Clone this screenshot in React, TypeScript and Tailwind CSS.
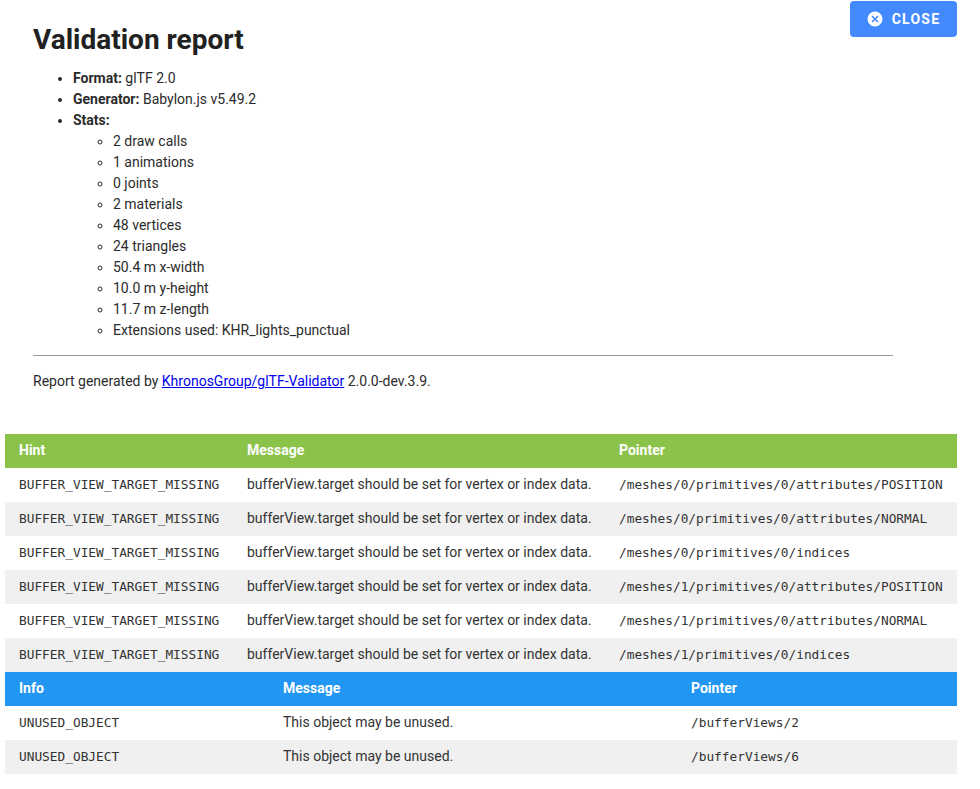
import { CircleX } from "lucide-react";

const stats = [
  "2 draw calls",
  "1 animations",
  "0 joints",
  "2 materials",
  "48 vertices",
  "24 triangles",
  "50.4 m x-width",
  "10.0 m y-height",
  "11.7 m z-length",
  "Extensions used: KHR_lights_punctual",
];

const hints = [
  "/meshes/0/primitives/0/attributes/POSITION",
  "/meshes/0/primitives/0/attributes/NORMAL",
  "/meshes/0/primitives/0/indices",
  "/meshes/1/primitives/0/attributes/POSITION",
  "/meshes/1/primitives/0/attributes/NORMAL",
  "/meshes/1/primitives/0/indices",
];

const infos = ["/bufferViews/2", "/bufferViews/6"];

function HeadRow({ color, label, widths }: { color: string; label: string; widths: string[] }) {
  return (
    <div className={`flex h-[34px] items-center pb-[2px] font-bold text-white ${color}`}>
      <div className={`pl-[14px] ${widths[0]}`}>{label}</div>
      <div className={`pl-[14px] ${widths[1]}`}>Message</div>
      <div className="flex-1 pl-[14px]">Pointer</div>
    </div>
  );
}

function Row({ code, message, pointer, widths }: { code: string; message: string; pointer: string; widths: string[] }) {
  return (
    <div className="flex h-[34px] items-center pb-[2px] text-[#333] even:bg-[#f0f0f0]">
      <div className={`pl-[14px] font-['DejaVu_Sans_Mono',monospace] text-[12.8px] ${widths[0]}`}>{code}</div>
      <div className={`pl-[14px] ${widths[1]}`}>{message}</div>
      <div className="flex-1 pl-[14px] font-['DejaVu_Sans_Mono',monospace] text-[12.8px]">{pointer}</div>
    </div>
  );
}

export default function App() {
  const hintWidths = ["w-[228px]", "w-[372px]"];
  const infoWidths = ["w-[264px]", "w-[408px]"];

  return (
    <div className="relative min-h-[789px] bg-white font-['Roboto',sans-serif] text-[14px] leading-[21px] text-[#212121]">
      <button className="absolute top-[1px] right-[23px] flex h-[36px] w-[107px] items-center justify-center gap-[7px] rounded-[4px] bg-[#448aff] pr-[2px] text-[14px] font-bold tracking-[1.25px] text-white">
        <CircleX size={20} fill="white" stroke="#448aff" strokeWidth={2} />
        CLOSE
      </button>

      <div className="w-[860px] ml-[33px] pt-[20px]">
        <h1 className="text-[28px] leading-[40px] font-bold">Validation report</h1>
        <ul className="mt-[8px] list-disc pl-[40px] text-[#2b2b2b]">
          <li><b>Format:</b> glTF 2.0</li>
          <li><b>Generator:</b> Babylon.js v5.49.2</li>
          <li>
            <b>Stats:</b>
            <ul className="list-[circle] pl-[40px]">
              {stats.map((s) => (
                <li key={s}>{s}</li>
              ))}
            </ul>
          </li>
        </ul>
        <hr className="mt-[14px] border-t border-[#999]" />
        <p className="mt-[15px] text-[#2b2b2b]">
          Report generated by <a href="#" className="text-[#0000ee] underline">KhronosGroup/glTF-Validator</a> 2.0.0-dev.3.9.
        </p>
      </div>

      <div className="mt-[42px] ml-[5px] w-[952px]">
        <HeadRow color="bg-[#8bc34a]" label="Hint" widths={hintWidths} />
        <div>
          {hints.map((p) => (
            <Row
              key={p}
              code="BUFFER_VIEW_TARGET_MISSING"
              message="bufferView.target should be set for vertex or index data."
              pointer={p}
              widths={hintWidths}
            />
          ))}
        </div>
        <HeadRow color="bg-[#2196f3]" label="Info" widths={infoWidths} />
        <div>
          {infos.map((p) => (
            <Row key={p} code="UNUSED_OBJECT" message="This object may be unused." pointer={p} widths={infoWidths} />
          ))}
        </div>
      </div>
    </div>
  );
}
